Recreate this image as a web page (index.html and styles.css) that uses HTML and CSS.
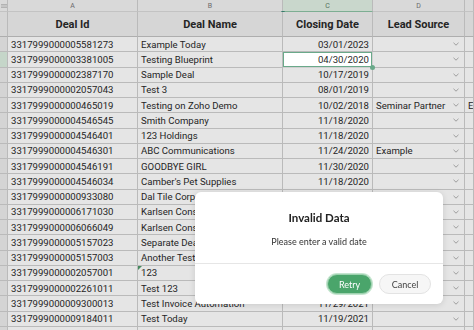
FILE: index.html
```html
<!DOCTYPE html>
<html lang="en">
  <head>
    <meta charset="UTF-8" />
    <meta name="viewport" content="width=device-width, initial-scale=1.0" />
    <title>Deals Sheet</title>
    <link rel="stylesheet" href="styles.css">
  </head>
  <body>
    <div class="sheet">
      <div class="row letters">
        <div class="cell corner">
          <svg width="6" height="6" viewBox="0 0 6 6"><path d="M0 1.5h6M0 3h6M0 4.5h6" stroke="#aaa" stroke-width="0.6"/></svg>
        </div>
        <div class="cell">A</div>
        <div class="cell">B</div>
        <div class="cell active">C</div>
        <div class="cell">D</div>
        <div class="cell"></div>
      </div>

      <div class="row head">
        <div class="cell gutter"></div>
        <div class="cell">Deal Id</div>
        <div class="cell">Deal Name</div>
        <div class="cell">Closing Date</div>
        <div class="cell">Lead Source</div>
        <div class="cell"></div>
      </div>

      <div id="rows"></div>
    </div>

    <div class="backdrop"></div>

    <div class="dialog">
      <div class="dialog-body">
        <h2 class="dialog-title">Invalid Data</h2>
        <p class="dialog-text">Please enter a valid date</p>
      </div>
      <div class="dialog-actions">
        <button class="btn btn-retry">Retry</button>
        <button class="btn btn-cancel">Cancel</button>
      </div>
    </div>

    <script>
      const deals = [
        ["3317999000005581273", "Example Today", "03/01/2023", ""],
        ["3317999000003381005", "Testing Blueprint", "04/30/2020", ""],
        ["3317999000002387170", "Sample Deal", "10/17/2019", ""],
        ["3317999000002057043", "Test 3", "08/01/2019", ""],
        ["3317999000000465019", "Testing on Zoho Demo", "10/02/2018", "Seminar Partner", "Ex"],
        ["3317999000004546545", "Smith Company", "11/18/2020", ""],
        ["3317999000004546401", "123 Holdings", "11/18/2020", ""],
        ["3317999000004546301", "ABC Communications", "11/24/2020", "Example"],
        ["3317999000004546191", "GOODBYE GIRL", "11/30/2020", ""],
        ["3317999000004546034", "Camber's Pet Supplies", "11/18/2020", ""],
        ["3317999000000933080", "Dal Tile Corporation", "12/02/2020", ""],
        ["3317999000006171030", "Karlsen Construction", "12/15/2020", ""],
        ["3317999000006066049", "Karlsen Construction", "12/15/2020", ""],
        ["3317999000005157023", "Separate Deal", "01/11/2021", ""],
        ["3317999000005157003", "Another Test Deal", "01/11/2021", ""],
        ["3317999000002057001", "123", "03/04/2021", ""],
        ["3317999000002261011", "Test 123", "06/21/2021", ""],
        ["3317999000009300013", "Test Invoice Automation", "11/29/2021", ""],
        ["3317999000009184011", "Test Today", "11/19/2021", ""],
        ["", "", "", ""]
      ];

      const chevron =
        '<svg class="chevron" width="6" height="4" viewBox="0 0 6 4"><path d="M0.5 0.8L3 3.2L5.5 0.8" fill="none" stroke="#9a9a9a" stroke-width="0.8"/></svg>';

      const list = document.querySelector("#rows");

      deals.forEach((deal, i) => {
        const row = document.createElement("div");
        row.classList.add("row");

        const gutter = i === 1 ? "cell gutter picked" : "cell gutter";
        const date = i === 1 ? "cell date selected" : "cell date";
        const name = i === 15 ? "cell note" : "cell";

        row.innerHTML =
          '<div class="' + gutter + '"></div>' +
          '<div class="cell">' + deal[0] + "</div>" +
          '<div class="' + name + '">' + deal[1] + "</div>" +
          '<div class="' + date + '">' + deal[2] + "</div>" +
          '<div class="cell pick"><span>' + deal[3] + "</span>" + chevron + "</div>" +
          '<div class="cell">' + (deal[4] || "") + "</div>";

        list.appendChild(row);
      });
    </script>
  </body>
</html>
```

FILE: styles.css
```css
* {
  padding: 0;
  margin: 0;
  box-sizing: border-box;
}

body {
  font-family: Roboto, "Liberation Sans", Arial, sans-serif;
  width: 474px;
  height: 330px;
  overflow: hidden;
  background: #ffffff;
  color: #2a2a2a;
}

.row {
  display: grid;
  grid-template-columns: 8px 130px 145px 90px 92px 1fr;
  height: 15.25px;
  font-size: 9.6px;
}

.cell {
  border-right: 1px solid #d0d0d0;
  border-bottom: 1px solid #d0d0d0;
  padding: 0 3px;
  display: flex;
  align-items: center;
  white-space: nowrap;
  overflow: hidden;
  background: #ffffff;
  position: relative;
}

.letters {
  height: 12px;
  font-size: 7px;
  color: #777;
}

.letters .cell {
  justify-content: center;
  background: #f2f2f2;
  border-bottom-color: #dadada;
  overflow: visible;
}

.letters .corner {
  padding: 0;
}

.letters .active {
  background: #e0f0e4;
  color: #5d7d68;
  border-bottom: 1px solid #8cc2a4;
}

.letters .active::before {
  content: "";
  position: absolute;
  left: -2px;
  bottom: -3px;
  border-top: 3px solid #3f8a78;
  border-left: 2px solid transparent;
  border-right: 2px solid transparent;
}

.head {
  height: 25px;
  font-size: 11px;
  font-weight: bold;
}

.head .cell {
  justify-content: center;
  background: #efefef;
  border-bottom-color: #c2c2c2;
}

.gutter {
  padding: 0;
  background: #ececec;
}

.gutter.picked {
  background: #dcefe0;
}

.date {
  justify-content: flex-end;
}

.selected {
  overflow: visible;
  box-shadow: inset 0 0 0 1px #6aa98a;
  z-index: 1;
}

.selected::after {
  content: "";
  position: absolute;
  right: -3px;
  bottom: -3px;
  width: 5px;
  height: 5px;
  border-radius: 50%;
  background: #6aa98a;
}

.note::before {
  content: "";
  position: absolute;
  left: 0;
  top: 0;
  border-top: 4px solid #4f9a6a;
  border-right: 4px solid transparent;
}

.pick {
  justify-content: space-between;
  padding-right: 5px;
}

.chevron {
  flex: none;
}

.backdrop {
  position: fixed;
  inset: 0;
  background: rgba(0, 0, 0, 0.1);
}

.dialog {
  position: absolute;
  left: 195px;
  top: 192px;
  width: 248px;
  height: 112px;
  background: #ffffff;
  border-radius: 6px;
  box-shadow: 0 1px 6px rgba(0, 0, 0, 0.12);
  font-family: Lato, "Open Sans", sans-serif;
  display: flex;
  flex-direction: column;
}

.dialog-body {
  height: 72px;
  border-bottom: 1px solid #e6e6e6;
  text-align: center;
  padding-top: 19px;
}

.dialog-title {
  font-size: 11.5px;
  font-weight: bold;
  color: #222;
  margin-bottom: 12px;
}

.dialog-text {
  font-size: 9px;
  color: #333;
}

.dialog-actions {
  display: flex;
  justify-content: flex-end;
  gap: 7px;
  padding: 10px 12px 0 0;
}

.btn {
  font-family: Lato, "Open Sans", sans-serif;
  font-size: 9px;
  height: 20px;
  border-radius: 10px;
}

.btn-retry {
  width: 45px;
  background: #4aa56b;
  color: #ffffff;
  border: 1px solid #9fd2b0;
  box-shadow: 0 0 0 1px #c4e5cf;
}

.btn-cancel {
  width: 52px;
  background: #f6f6f6;
  color: #444;
  border: 1px solid #e3e3e3;
}
```
